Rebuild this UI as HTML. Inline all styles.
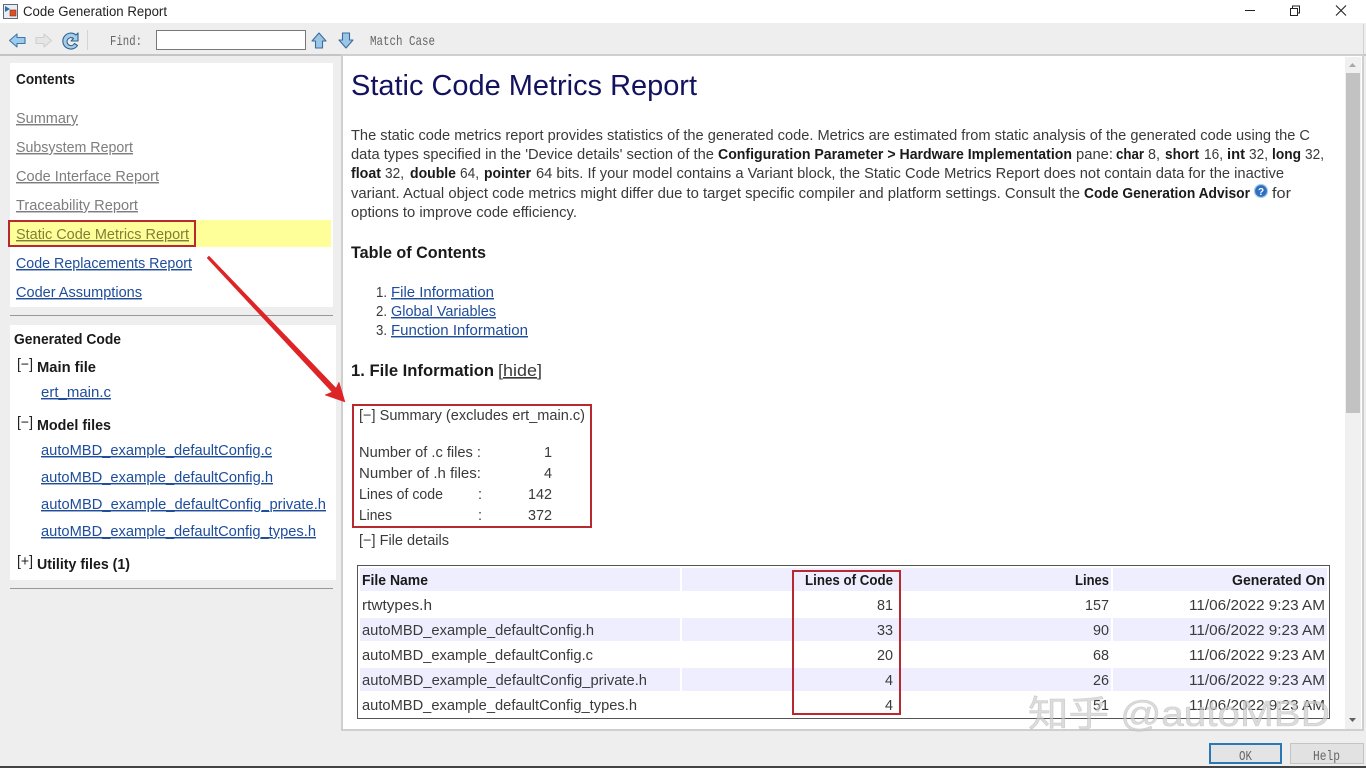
<!DOCTYPE html>
<html lang="en"><head><meta charset="utf-8"><title>Code Generation Report</title>
<style>
html,body{margin:0;padding:0;width:1366px;height:768px;overflow:hidden;background:#fff}
svg{display:block;position:absolute;left:0;top:0}
text{font-family:"Liberation Sans","Noto Sans CJK SC",sans-serif;font-size:14.5px;fill:#3a3a3a;white-space:pre}
.b{font-weight:bold;fill:#1a1a1a}
.l{fill:#1f4d9c;text-decoration:underline}
.g{fill:#7d7d7d;text-decoration:underline}
.y{fill:#7f7f3a;text-decoration:underline}
.m{font-family:"Liberation Mono",monospace;font-size:14px;fill:#666}
</style></head><body>
<svg width="1366" height="768" viewBox="0 0 1366 768" xmlns="http://www.w3.org/2000/svg">
<!-- window -->
<rect width="1366" height="768" fill="#eeeeee"/>
<rect width="1366" height="23" fill="#ffffff"/>
<!-- app icon -->
<rect x="3.500" y="4.500" width="14" height="14" fill="#e8eef4" stroke="#5b6b7b"/>
<path d="M5 6l5 3-5 3z" fill="#2a6fb5"/><rect x="10" y="10" width="6" height="6" fill="#d8502a" stroke="#8a2f15" stroke-width=".6"/>
<text x="23" y="16" textLength="144" lengthAdjust="spacingAndGlyphs" style="font-size:13.500px;fill:#222">Code Generation Report</text>
<!-- window controls -->
<path d="M1245 10.500h10" stroke="#222" stroke-width="1"/>
<path d="M1290.500 8.500h7v7h-7zM1292.500 8.500v-2.500h7v7h-2" fill="none" stroke="#222"/>
<path d="M1336 5.500l10 10M1346 5.500l-10 10" stroke="#222" stroke-width="1.100"/>
<!-- toolbar -->
<rect y="23" width="1366" height="31" fill="#eeeeee"/>
<rect y="54" width="1366" height="2" fill="#c4c4c4"/>
<rect x="1363" y="24" width="1" height="30" fill="#d2d2d2"/>
<path d="M9.500 40.500l7.500-6.500v3.500h8v6h-8v3.500z" fill="#9ccbed" stroke="#3f77ab" stroke-width="1.100" stroke-linejoin="round"/>
<path d="M51.500 40.500l-7.500-6.500v3.500h-8v6h8v3.500z" fill="#e6e6e6" stroke="#cfcfcf" stroke-width="1.100" stroke-linejoin="round"/>
<path d="M78 33v8h-7l2.500-2.500a4 4 0 1 0 1 5l3 2a8 8 0 1 1-1.500-10.500z" fill="#a5cde9" stroke="#2f618f" stroke-width="1.100" stroke-linejoin="round"/>
<rect x="87" y="30" width="1" height="20" fill="#d4d4d4"/>
<text class="m" x="110" y="45" textLength="32" lengthAdjust="spacingAndGlyphs">Find:</text>
<rect x="156.500" y="30.500" width="149" height="19" fill="#fff" stroke="#777"/>
<path d="M319 33l7 8h-3.500v7h-7v-7H312z" fill="#9cc6e6" stroke="#3a6c9c" stroke-width="1.100" stroke-linejoin="round"/>
<path d="M346 48l7-8h-3.500v-7h-7v7H339z" fill="#9cc6e6" stroke="#3a6c9c" stroke-width="1.100" stroke-linejoin="round"/>
<text class="m" x="370" y="45" textLength="65" lengthAdjust="spacingAndGlyphs">Match Case</text>

<!-- left panel -->
<rect x="10" y="63" width="323" height="244" fill="#fff"/>
<text class="b" x="16" y="84" textLength="59" lengthAdjust="spacingAndGlyphs">Contents</text>
<text class="g" x="16" y="123" textLength="62" lengthAdjust="spacingAndGlyphs">Summary</text>
<text class="g" x="16" y="152" textLength="117" lengthAdjust="spacingAndGlyphs">Subsystem Report</text>
<text class="g" x="16" y="181" textLength="143" lengthAdjust="spacingAndGlyphs">Code Interface Report</text>
<text class="g" x="16" y="210" textLength="122" lengthAdjust="spacingAndGlyphs">Traceability Report</text>
<rect x="10" y="220" width="321" height="27" fill="#ffff99"/>
<text class="y" x="16" y="239" textLength="173" lengthAdjust="spacingAndGlyphs">Static Code Metrics Report</text>
<rect x="9" y="221" width="186" height="25" fill="none" stroke="#b8282e" stroke-width="2"/>
<text class="l" x="16" y="268" textLength="176" lengthAdjust="spacingAndGlyphs">Code Replacements Report</text>
<text class="l" x="16" y="297" textLength="126" lengthAdjust="spacingAndGlyphs">Coder Assumptions</text>
<rect x="10" y="315" width="323" height="1" fill="#999"/>

<rect x="10" y="325" width="326" height="255" fill="#fff"/>
<text class="b" x="14" y="344" textLength="107" lengthAdjust="spacingAndGlyphs">Generated Code</text>
<text x="17" y="369" textLength="16" lengthAdjust="spacingAndGlyphs" style="fill:#222">[−]</text>
<text class="b" x="37" y="372" textLength="59" lengthAdjust="spacingAndGlyphs">Main file</text>
<text class="l" x="41" y="397" textLength="70" lengthAdjust="spacingAndGlyphs">ert_main.c</text>
<text x="17" y="427" textLength="16" lengthAdjust="spacingAndGlyphs" style="fill:#222">[−]</text>
<text class="b" x="37" y="430" textLength="74" lengthAdjust="spacingAndGlyphs">Model files</text>
<text class="l" x="41" y="455" textLength="231" lengthAdjust="spacingAndGlyphs">autoMBD_example_defaultConfig.c</text>
<text class="l" x="41" y="482" textLength="232" lengthAdjust="spacingAndGlyphs">autoMBD_example_defaultConfig.h</text>
<text class="l" x="41" y="509" textLength="285" lengthAdjust="spacingAndGlyphs">autoMBD_example_defaultConfig_private.h</text>
<text class="l" x="41" y="536" textLength="275" lengthAdjust="spacingAndGlyphs">autoMBD_example_defaultConfig_types.h</text>
<text x="17" y="566" textLength="16" lengthAdjust="spacingAndGlyphs" style="fill:#222">[+]</text>
<text class="b" x="37" y="569" textLength="93" lengthAdjust="spacingAndGlyphs">Utility files (1)</text>
<rect x="10" y="588" width="323" height="1" fill="#999"/>

<!-- main panel -->
<rect x="342" y="55" width="1021" height="675" fill="#fff" stroke="#cfcfcf" stroke-width="2"/>
<rect x="1345" y="57" width="16" height="672" fill="#f0f0f0"/>
<rect x="1346" y="73" width="14" height="340" fill="#c2c2c2"/>
<path d="M1349 67l3.500-4 3.500 4z" fill="#a8a8a8"/><path d="M1349 718l3.500 4 3.500-4z" fill="#606060"/>
<text x="351" y="95" textLength="346" lengthAdjust="spacingAndGlyphs" style="font-size:29px;fill:#12125e">Static Code Metrics Report</text>

<text x="351" y="140" textLength="959" lengthAdjust="spacingAndGlyphs">The static code metrics report provides statistics of the generated code. Metrics are estimated from static analysis of the generated code using the C</text>
<text x="351" y="159" textLength="363" lengthAdjust="spacingAndGlyphs">data types specified in the 'Device details' section of the</text>
<text class="b" x="718" y="159" textLength="354" lengthAdjust="spacingAndGlyphs">Configuration Parameter &gt; Hardware Implementation</text>
<text x="1076" y="159" textLength="37" lengthAdjust="spacingAndGlyphs">pane:</text>
<text class="b" x="1116" y="159" textLength="28" lengthAdjust="spacingAndGlyphs">char</text>
<text x="1148" y="159" textLength="12" lengthAdjust="spacingAndGlyphs">8,</text>
<text class="b" x="1165" y="159" textLength="34" lengthAdjust="spacingAndGlyphs">short</text>
<text x="1204" y="159" textLength="19" lengthAdjust="spacingAndGlyphs">16,</text>
<text class="b" x="1227" y="159" textLength="18" lengthAdjust="spacingAndGlyphs">int</text>
<text x="1249" y="159" textLength="19" lengthAdjust="spacingAndGlyphs">32,</text>
<text class="b" x="1272" y="159" textLength="29" lengthAdjust="spacingAndGlyphs">long</text>
<text x="1305" y="159" textLength="19" lengthAdjust="spacingAndGlyphs">32,</text>
<text class="b" x="351" y="178" textLength="30" lengthAdjust="spacingAndGlyphs">float</text>
<text x="385" y="178" textLength="19" lengthAdjust="spacingAndGlyphs">32,</text>
<text class="b" x="410" y="178" textLength="46" lengthAdjust="spacingAndGlyphs">double</text>
<text x="460" y="178" textLength="19" lengthAdjust="spacingAndGlyphs">64,</text>
<text class="b" x="484" y="178" textLength="47" lengthAdjust="spacingAndGlyphs">pointer</text>
<text x="536" y="178" textLength="748" lengthAdjust="spacingAndGlyphs">64 bits. If your model contains a Variant block, the Static Code Metrics Report does not contain data for the inactive</text>
<text x="351" y="198" textLength="729" lengthAdjust="spacingAndGlyphs">variant. Actual object code metrics might differ due to target specific compiler and platform settings. Consult the</text>
<text class="b" x="1084" y="198" textLength="166" lengthAdjust="spacingAndGlyphs">Code Generation Advisor</text>
<circle cx="1261" cy="191" r="6.500" fill="#2f6fc0" stroke="#a9cbe8" stroke-width="1.200"/>
<text x="1258" y="195" style="font-size:10px;font-weight:bold;fill:#fff">?</text>
<text x="1272" y="198" textLength="19" lengthAdjust="spacingAndGlyphs">for</text>
<text x="351" y="217" textLength="226" lengthAdjust="spacingAndGlyphs">options to improve code efficiency.</text>

<text class="b" x="351" y="258" textLength="135" lengthAdjust="spacingAndGlyphs" style="font-size:16.500px">Table of Contents</text>
<text x="376" y="297" textLength="11" lengthAdjust="spacingAndGlyphs">1.</text>
<text class="l" x="391" y="297" textLength="103" lengthAdjust="spacingAndGlyphs">File Information</text>
<text x="376" y="316" textLength="11" lengthAdjust="spacingAndGlyphs">2.</text>
<text class="l" x="391" y="316" textLength="105" lengthAdjust="spacingAndGlyphs">Global Variables</text>
<text x="376" y="335" textLength="11" lengthAdjust="spacingAndGlyphs">3.</text>
<text class="l" x="391" y="335" textLength="137" lengthAdjust="spacingAndGlyphs">Function Information</text>
<text class="b" x="351" y="376" textLength="143" lengthAdjust="spacingAndGlyphs" style="font-size:16.500px">1. File Information</text>
<text x="498" y="376" textLength="44" lengthAdjust="spacingAndGlyphs" style="font-size:16.500px">[<tspan text-decoration="underline">hide</tspan>]</text>

<rect x="353" y="405" width="238" height="122" fill="none" stroke="#b8282e" stroke-width="2"/>
<text x="359" y="420" textLength="226" lengthAdjust="spacingAndGlyphs">[−] Summary (excludes ert_main.c)</text>
<text x="359" y="457" textLength="122" lengthAdjust="spacingAndGlyphs">Number of .c files :</text>
<text x="544" y="457">1</text>
<text x="359" y="478" textLength="122" lengthAdjust="spacingAndGlyphs">Number of .h files:</text>
<text x="544" y="478">4</text>
<text x="359" y="499" textLength="84" lengthAdjust="spacingAndGlyphs">Lines of code</text>
<text x="478" y="499">:</text>
<text x="528" y="499" textLength="24" lengthAdjust="spacingAndGlyphs">142</text>
<text x="359" y="520" textLength="33" lengthAdjust="spacingAndGlyphs">Lines</text>
<text x="478" y="520">:</text>
<text x="528" y="520" textLength="24" lengthAdjust="spacingAndGlyphs">372</text>
<text x="359" y="545" textLength="90" lengthAdjust="spacingAndGlyphs">[−] File details</text>

<!-- table -->
<rect x="357.500" y="565.500" width="972" height="153" fill="#fff" stroke="#555"/>
<g fill="#eeeeff">
<rect x="360" y="568" width="320" height="23"/><rect x="682" y="568" width="429" height="23"/><rect x="1113" y="568" width="214" height="23"/>
<rect x="360" y="618" width="320" height="23"/><rect x="682" y="618" width="429" height="23"/><rect x="1113" y="618" width="214" height="23"/>
<rect x="360" y="668" width="320" height="23"/><rect x="682" y="668" width="429" height="23"/><rect x="1113" y="668" width="214" height="23"/>
</g>
<text class="b" x="362" y="585" textLength="66" lengthAdjust="spacingAndGlyphs">File Name</text>
<text class="b" x="805" y="585" textLength="88" lengthAdjust="spacingAndGlyphs">Lines of Code</text>
<text class="b" x="1075" y="585" textLength="34" lengthAdjust="spacingAndGlyphs">Lines</text>
<text class="b" x="1232" y="585" textLength="93" lengthAdjust="spacingAndGlyphs">Generated On</text>

<text x="362" y="610" textLength="70" lengthAdjust="spacingAndGlyphs">rtwtypes.h</text>
<text x="362" y="635" textLength="232" lengthAdjust="spacingAndGlyphs">autoMBD_example_defaultConfig.h</text>
<text x="362" y="660" textLength="231" lengthAdjust="spacingAndGlyphs">autoMBD_example_defaultConfig.c</text>
<text x="362" y="685" textLength="285" lengthAdjust="spacingAndGlyphs">autoMBD_example_defaultConfig_private.h</text>
<text x="362" y="710" textLength="275" lengthAdjust="spacingAndGlyphs">autoMBD_example_defaultConfig_types.h</text>

<text x="877" y="610" textLength="16" lengthAdjust="spacingAndGlyphs">81</text>
<text x="877" y="635" textLength="16" lengthAdjust="spacingAndGlyphs">33</text>
<text x="877" y="660" textLength="16" lengthAdjust="spacingAndGlyphs">20</text>
<text x="885" y="685" textLength="8" lengthAdjust="spacingAndGlyphs">4</text>
<text x="885" y="710" textLength="8" lengthAdjust="spacingAndGlyphs">4</text>

<text x="1085" y="610" textLength="24" lengthAdjust="spacingAndGlyphs">157</text>
<text x="1093" y="635" textLength="16" lengthAdjust="spacingAndGlyphs">90</text>
<text x="1093" y="660" textLength="16" lengthAdjust="spacingAndGlyphs">68</text>
<text x="1093" y="685" textLength="16" lengthAdjust="spacingAndGlyphs">26</text>
<text x="1093" y="710" textLength="16" lengthAdjust="spacingAndGlyphs">51</text>

<text x="1189" y="610" textLength="136" lengthAdjust="spacingAndGlyphs">11/06/2022 9:23 AM</text>
<text x="1189" y="635" textLength="136" lengthAdjust="spacingAndGlyphs">11/06/2022 9:23 AM</text>
<text x="1189" y="660" textLength="136" lengthAdjust="spacingAndGlyphs">11/06/2022 9:23 AM</text>
<text x="1189" y="685" textLength="136" lengthAdjust="spacingAndGlyphs">11/06/2022 9:23 AM</text>
<text x="1189" y="710" textLength="136" lengthAdjust="spacingAndGlyphs">11/06/2022 9:23 AM</text>

<rect x="793" y="571" width="107" height="143" fill="none" stroke="#b8282e" stroke-width="2"/>

<!-- red arrow -->
<path d="M207 258L209 256L336 388L339 382L345 402L325 395L332 392Z" fill="#dd2528" stroke="#dd2528" stroke-width=".5" stroke-linejoin="round"/>

<!-- watermark -->
<text x="1028" y="726" textLength="302" lengthAdjust="spacingAndGlyphs" style="font-size:36px;fill:rgba(205,205,205,.7);stroke:rgba(165,165,165,.4);stroke-width:.6px">知乎 @autoMBD</text>

<!-- bottom bar -->
<rect x="1210" y="744" width="71" height="19" fill="#e4e4e4" stroke="#2a78b4" stroke-width="2"/>
<text class="m" x="1239" y="760" textLength="13" lengthAdjust="spacingAndGlyphs">OK</text>
<rect x="1290.500" y="743.500" width="73" height="20" fill="#e2e2e2" stroke="#c4c4c4"/>
<text class="m" x="1313" y="760" textLength="27" lengthAdjust="spacingAndGlyphs">Help</text>
<rect y="766" width="1366" height="2" fill="#444"/>
</svg>
</body></html>
